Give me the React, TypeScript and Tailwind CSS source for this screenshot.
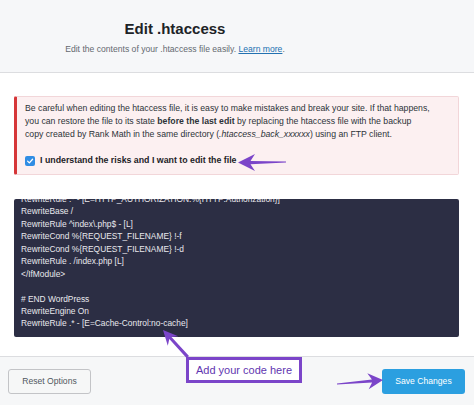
import React from "react";

const codeLines = [
  "RewriteRule .* - [E=HTTP_AUTHORIZATION:%{HTTP:Authorization}]",
  "RewriteBase /",
  "RewriteRule ^index\\.php$ - [L]",
  "RewriteCond %{REQUEST_FILENAME} !-f",
  "RewriteCond %{REQUEST_FILENAME} !-d",
  "RewriteRule . /index.php [L]",
  "</IfModule>",
  "",
  "# END WordPress",
  "RewriteEngine On",
  "RewriteRule .* - [E=Cache-Control:no-cache]",
];

export default function App() {
  return (
    <div
      className="relative w-[474px] h-[405px] overflow-hidden bg-white flex flex-col"
      style={{ fontFamily: '"Liberation Sans", Arial, sans-serif' }}
    >
      {/* Header */}
      <div className="h-[73px] shrink-0 bg-[#f6f7f9] border-b border-[#dcdde0]">
        <div className="w-[350px] flex flex-col items-center pt-[20px]">
          <div className="text-[15px] leading-[18px] font-bold text-[#1d2327]">Edit .htaccess</div>
          <div className="mt-[5px] text-[8.6px] leading-[12px] text-[#646970]">
            Edit the contents of your .htaccess file easily.{" "}
            <span className="text-[#2271b1] underline">Learn more</span>.
          </div>
        </div>
      </div>

      {/* Warning */}
      <div className="mt-[23px] mx-[14px] w-[445px] bg-[#fcf0f1] border border-[#f2d6d9] border-l-[3px] border-l-[#d63638] rounded-[2px] pl-[8px] pr-[4px] pt-[5px] pb-[7px]">
        <p className="text-[8.7px] leading-[13px] text-[#2c3338] whitespace-nowrap">
          Be careful when editing the htaccess file, it is easy to make mistakes and break your site. If that happens,
          <br />
          you can restore the file to its state <b>before the last edit</b> by replacing the htaccess file with the backup
          <br />
          copy created by Rank Math in the same directory (<i>.htaccess_back_xxxxxx</i>) using an FTP client.
        </p>
        <div className="mt-[13px] flex items-center gap-[5px] h-[13px]">
          <span className="w-[10px] h-[10px] rounded-[2px] bg-[#2f8de4] flex items-center justify-center">
            <svg width="8" height="8" viewBox="0 0 10 10">
              <path d="M2 5.2 L4.2 7.3 L8.2 2.8" stroke="white" strokeWidth="1.6" fill="none" strokeLinecap="round" strokeLinejoin="round" />
            </svg>
          </span>
          <span className="text-[8.8px] leading-[13px] font-bold text-[#1d2327]">
            I understand the risks and I want to edit the file
          </span>
        </div>
      </div>

      {/* Code editor */}
      <div className="mt-[24px] mx-[14px] w-[445px] h-[138px] bg-[#2c2e44] rounded-[2px] overflow-hidden pl-[7px]">
        <div className="mt-[-6px] flex flex-col">
          {codeLines.map((l, i) => (
            <div key={i} className="h-[12.45px] leading-[12.45px] text-[8.4px] text-[#e9e9ee] whitespace-pre">
              {l || " "}
            </div>
          ))}
        </div>
      </div>

      {/* Footer */}
      <div className="mt-[19px] flex-1 bg-[#f6f7f8] border-t border-[#dcdde0] flex items-start justify-between px-[8px] pt-[12px]">
        <button className="w-[83px] h-[25px] bg-[#f6f7f7] border border-[#c3c4c7] rounded-[3px] text-[8.6px] text-[#50575e]">
          Reset Options
        </button>
        <button className="w-[83px] h-[25px] mr-[1px] bg-[#2b9fe0] rounded-[3px] text-[8.6px] text-white">
          Save Changes
        </button>
      </div>

      {/* Annotation box */}
      <div className="absolute left-[186px] top-[357px] w-[116px] h-[26px] border-[3px] border-[#7b45c9] bg-white flex items-center justify-center text-[11px] text-[#5f35b0]">
        Add your code here
      </div>

      {/* Arrows */}
      <svg className="absolute left-0 top-0 pointer-events-none" width="474" height="405" viewBox="0 0 474 405">
        <path d="M238,162.5 L255,154 L250.5,161 L286,161.6 L286,162.6 L250.5,164.2 L255,171 Z" fill="#7b45c9" />
        <path d="M163,330 L178.2,336.3 L171.5,337.1 L189,356 L186.5,358 L169.3,339.1 L167.8,345.7 Z" fill="#7b45c9" />
        <path d="M383,380 L367.3,373.3 L371.9,379.5 L337,383.5 L337,384.5 L372.1,382.5 L368.7,389.3 Z" fill="#7b45c9" />
      </svg>
    </div>
  );
}
